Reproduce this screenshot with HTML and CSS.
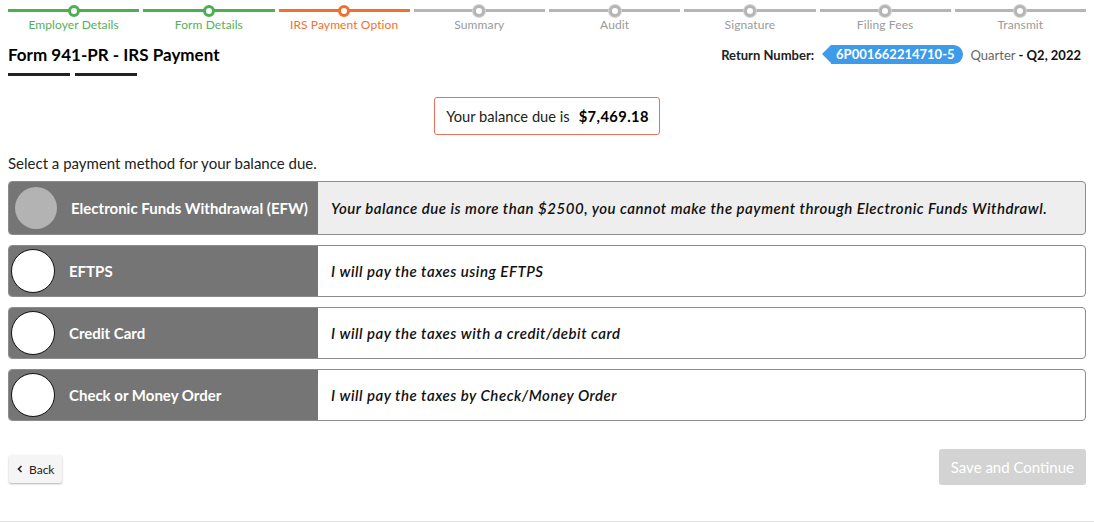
FILE: index.html
```html
<!DOCTYPE html>
<html lang="en">
<head>
<meta charset="utf-8">
<title>Form 941-PR - IRS Payment</title>
<link rel="stylesheet" href="styles.css">
</head>
<body>
<div class="page">
  <ol class="stepper">
    <li class="step done"><div class="track"><span class="dot"></span></div><span class="label">Employer Details</span></li>
    <li class="step done"><div class="track"><span class="dot"></span></div><span class="label">Form Details</span></li>
    <li class="step active"><div class="track"><span class="dot"></span></div><span class="label">IRS Payment Option</span></li>
    <li class="step"><div class="track"><span class="dot"></span></div><span class="label">Summary</span></li>
    <li class="step"><div class="track"><span class="dot"></span></div><span class="label">Audit</span></li>
    <li class="step"><div class="track"><span class="dot"></span></div><span class="label">Signature</span></li>
    <li class="step"><div class="track"><span class="dot"></span></div><span class="label">Filing Fees</span></li>
    <li class="step"><div class="track"><span class="dot"></span></div><span class="label">Transmit</span></li>
  </ol>

  <div class="header">
    <div class="title-block">
      <h1 class="title">Form 941-PR - IRS Payment</h1>
      <div class="underlines"><span></span><span></span></div>
    </div>
    <div class="meta">
      <span class="meta-label">Return Number:</span>
      <span class="badge">6P001662214710-5</span>
      <span class="quarter">Quarter <b>- Q2, 2022</b></span>
    </div>
  </div>

  <div class="balance-wrap">
    <div class="balance">Your balance due is <b>$7,469.18</b></div>
  </div>

  <p class="prompt">Select a payment method for your balance due.</p>

  <div class="options">
    <div class="option disabled">
      <div class="opt-left"><span class="radio"></span><span class="opt-name">Electronic Funds Withdrawal (EFW)</span></div>
      <div class="opt-right">Your balance due is more than $2500, you cannot make the payment through Electronic Funds Withdrawl.</div>
    </div>
    <div class="option">
      <div class="opt-left"><span class="radio"></span><span class="opt-name">EFTPS</span></div>
      <div class="opt-right">I will pay the taxes using EFTPS</div>
    </div>
    <div class="option">
      <div class="opt-left"><span class="radio"></span><span class="opt-name">Credit Card</span></div>
      <div class="opt-right">I will pay the taxes with a credit/debit card</div>
    </div>
    <div class="option">
      <div class="opt-left"><span class="radio"></span><span class="opt-name">Check or Money Order</span></div>
      <div class="opt-right">I will pay the taxes by Check/Money Order</div>
    </div>
  </div>

  <div class="actions">
    <button class="btn-back" type="button"><svg class="chev" width="6" height="8" viewBox="0 0 6 8"><path d="M4.5 1 L1.5 4 L4.5 7" fill="none" stroke="#222" stroke-width="1.6"/></svg>Back</button>
    <button class="btn-save" type="button" disabled>Save and Continue</button>
  </div>
</div>
<div class="footer-line"></div>
</body>
</html>
```
FILE: styles.css
```css
* { box-sizing: border-box; }
html, body { margin: 0; padding: 0; background: #fff; }
body { font-family: "Lato", "Noto Sans", sans-serif; color: #111; }
.page { padding: 0 8px; height: 521px; }

.stepper { list-style: none; margin: 0; padding: 9px 0 0; display: flex; gap: 4px; }
.step { flex: 1; display: flex; flex-direction: column; align-items: center; }
.track { width: 100%; height: 3px; background: #b5b5b5; display: flex; align-items: center; justify-content: center; }
.dot { width: 12px; height: 12px; border-radius: 50%; background: #fff; border: 3px solid #b5b5b5; flex: none; box-shadow: 0 0 0 1px #d6d6d6; }
.label { margin-top: 6px; font-size: 12px; line-height: 14px; color: #9a9a9a; letter-spacing: 0.1px; }
.step.done .track { background: #4caf50; }
.step.done .dot { border-color: #4caf50; box-shadow: none; }
.step.done .label { color: #55b05a; }
.step.active .track { background: #f07030; }
.step.active .dot { border-color: #f07030; box-shadow: none; }
.step.active .label { color: #f07030; }

.header { display: flex; justify-content: space-between; align-items: flex-start; margin-top: 13px; }
.title { margin: 0; font-size: 17px; line-height: 20px; font-weight: 700; color: #000; }
.underlines { display: flex; gap: 5px; margin-top: 8px; }
.underlines span { width: 62px; height: 3px; background: #222; }
.meta { display: flex; align-items: center; font-size: 13px; margin-top: 0; margin-right: 5px; }
.meta-label { font-weight: 700; color: #222; margin-right: 17px; }
.badge { position: relative; background: #3d9be9; color: #fff; font-weight: 700; font-size: 13px; line-height: 19px; padding: 0 8px 0 5px; border-radius: 0 10px 10px 0; }
.badge::before { content: ""; position: absolute; right: 100%; top: 0; border-right: 9px solid #3d9be9; border-top: 9.5px solid transparent; border-bottom: 9.5px solid transparent; }
.quarter { margin-left: 8px; color: #666; }
.quarter b { color: #111; }

.balance-wrap { display: flex; justify-content: center; margin-top: 21px; }
.balance { border: 1px solid #e8705a; border-radius: 3px; padding: 0 10px 0 11px; height: 38px; display: flex; align-items: center; gap: 5px; font-size: 14.7px; color: #222; }
.balance b { color: #000; margin-left: 4px; letter-spacing: 0.4px; }

.prompt { margin: 19px 0 9px; font-size: 15px; line-height: 18px; color: #222; }

.options { display: flex; flex-direction: column; gap: 10px; }
.option { display: flex; height: 52px; border: 1px solid #8c8c8c; border-radius: 4px; overflow: hidden; background: #fff; }
.option.disabled { height: 54px; background: #eeeeee; }
.opt-left { width: 309px; flex: none; background: #757575; display: flex; align-items: center; padding-left: 2px; }
.radio { width: 44px; height: 44px; border-radius: 50%; background: #fff; border: 1px solid #111; flex: none; }
.option.disabled .radio { width: 42px; height: 42px; background: #b3b3b3; border: none; margin-left: 4px; }
.opt-name { margin-left: 14px; color: #fff; font-weight: 700; font-size: 15px; }
.opt-right { flex: 1; display: flex; align-items: center; padding-left: 13px; font-style: italic; font-weight: 600; font-size: 15px; color: #111; letter-spacing: 0.52px; }

.actions { display: flex; justify-content: space-between; align-items: flex-start; margin-top: 28px; }
.btn-back { display: flex; align-items: center; gap: 6px; height: 28px; margin-top: 6px; padding: 0 8px; margin-left: 1px; background: #f5f5f5; border: none; border-radius: 2px; box-shadow: 0 1px 2px rgba(0,0,0,0.3); font-family: "Lato", sans-serif; font-size: 12px; color: #222; }
.btn-save { height: 36px; padding: 0 12px; background: #d3d3d3; color: #fff; border: none; border-radius: 3px; font-family: "Lato", sans-serif; font-size: 15px; }

.footer-line { height: 1px; background: #e3e3e3; }
```
